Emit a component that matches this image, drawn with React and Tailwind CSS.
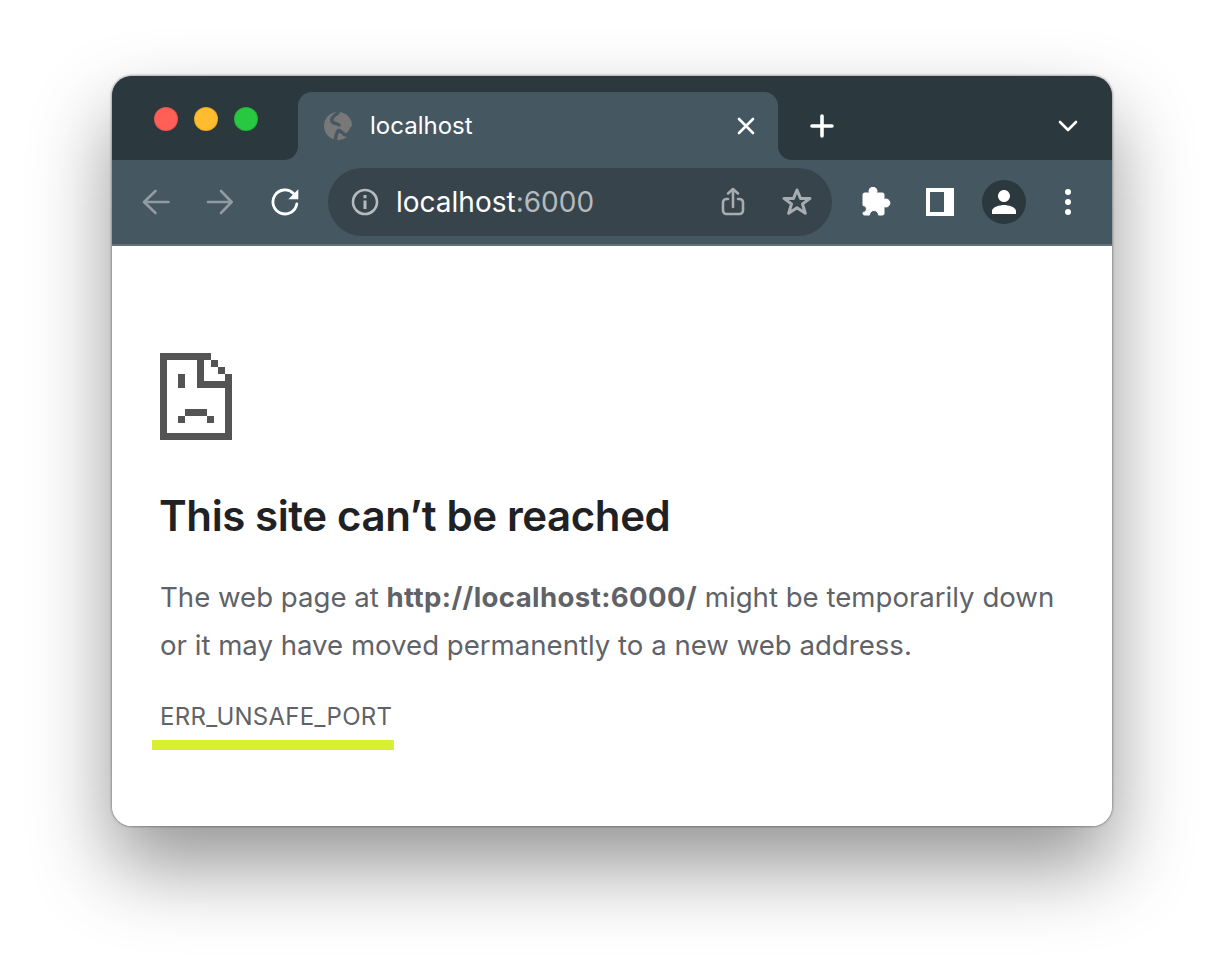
import React from 'react';

const Mat = ({ d, className }) => (
  <svg viewBox="0 0 24 24" fill="currentColor" className={className}>
    <path d={d} />
  </svg>
);

// the sad page icon from the chrome error screen
const SadPage = () => (
  <svg width="72" height="87" viewBox="0 0 72 87" fill="#545454" shapeRendering="crispEdges">
    <rect x="0" y="0" width="7" height="87" />
    <rect x="0" y="0" width="51" height="7" />
    <rect x="0" y="80" width="72" height="7" />
    <rect x="65" y="21" width="7" height="66" />
    <rect x="37" y="0" width="7" height="35" />
    <rect x="37" y="28" width="35" height="7" />
    <rect x="51" y="7" width="7" height="7" />
    <rect x="58" y="14" width="7" height="7" />
    <rect x="18" y="21" width="7" height="14" />
    <rect x="25" y="56" width="22" height="7" />
    <rect x="18" y="63" width="7" height="7" />
    <rect x="47" y="63" width="7" height="7" />
  </svg>
);

const Dot = ({ className }) => <div className={`w-6 h-6 rounded-full border border-black/10 ${className}`} />;

const TabStrip = () => (
  <div className="flex h-[84px] bg-[#455761]">
    <div className="w-[186px] bg-[#2b383e] rounded-br-[14px] flex gap-4 pl-[42px] pt-[31px]">
      <Dot className="bg-[#ff5f57]" />
      <Dot className="bg-[#febc2e]" />
      <Dot className="bg-[#28c840]" />
    </div>
    <div className="w-[480px] bg-[#2b383e] pt-4">
      <div className="h-[68px] bg-[#455761] rounded-t-[14px] flex items-center pl-[26px] pr-[23px]">
        <svg width="28" height="28" viewBox="0 0 28 28" fill="none" className="shrink-0">
          <circle cx="14" cy="14" r="14" fill="#787878" />
          <path d="M14 1C8.5 4 6 8.5 9 10.5c1.8 1.2 4.5.6 6 2.5" stroke="#455761" strokeWidth="3.4" strokeLinecap="round" />
          <path d="M28 16c-2.5 5.5-5 8-7.5 6.5C18 21 15.500 17 14 19c-1.200 1.600-2 4.500-2.500 8" stroke="#455761" strokeWidth="3.4" strokeLinecap="round" />
        </svg>
        <span className="ml-[18px] text-[24px] text-white">localhost</span>
        <svg width="18" height="18" viewBox="0 0 18 18" className="ml-auto text-white" stroke="currentColor" strokeWidth="2.6" strokeLinecap="round">
          <path d="M2 2l14 14M16 2L2 16" />
        </svg>
      </div>
    </div>
    <div className="flex-1 bg-[#2b383e] rounded-bl-[14px] flex items-center pl-[32px] pr-[34px] pt-4 justify-between">
      <svg width="24" height="24" viewBox="0 0 24 24" stroke="white" strokeWidth="3.6" strokeLinecap="round">
        <path d="M12 2v20M2 12h20" />
      </svg>
      <svg width="20" height="12" viewBox="0 0 20 12" fill="none" stroke="white" strokeWidth="2.6" strokeLinecap="round" strokeLinejoin="round">
        <path d="M2 2l8 8 8-8" />
      </svg>
    </div>
  </div>
);

const Toolbar = () => (
  <div className="h-[86px] bg-[#455761] border-b-2 border-[#62727b] flex pt-2 items-start">
    <div className="flex items-center h-[68px] pl-[28px] gap-[30px] w-[216px]">
      <svg width="34" height="28" viewBox="0 0 34 28" fill="none" stroke="#929ba1" strokeWidth="2.6" strokeLinecap="round" strokeLinejoin="round" className="shrink-0">
        <path d="M28.5 14H4.5M15.5 3L4 14l11.5 11" />
      </svg>
      <svg width="34" height="28" viewBox="0 0 34 28" fill="none" stroke="#929ba1" strokeWidth="2.6" strokeLinecap="round" strokeLinejoin="round" className="shrink-0">
        <path d="M4 14h23.7M17 3l10.7 11L17 25" />
      </svg>
      <svg width="28" height="28" viewBox="0 0 28 28" fill="none" className="shrink-0 ml-[3px]">
        <path d="M25.8 16A12 12 0 1 1 22.5 5.5" stroke="white" strokeWidth="2.8" strokeLinecap="round" />
        <path d="M27.3 1.3v10h-10z" fill="white" />
      </svg>
    </div>
    <div className="w-[504px] h-[68px] rounded-full bg-[#37444c] flex items-center pl-[23px] pr-[20px]">
      <svg width="28" height="28" viewBox="0 0 28 28" fill="none" stroke="#b5babe" strokeWidth="2.6" className="shrink-0">
        <circle cx="14" cy="14" r="12" />
        <path d="M14 12.5V21" strokeWidth="3" />
        <path d="M14 7v3.2" strokeWidth="3" />
      </svg>
      <span className="ml-[17px] text-[28px] text-white">
        localhost<span className="text-[#b5babe]">:6000</span>
      </span>
      <svg width="24" height="30" viewBox="0 0 24 30" fill="none" stroke="#a7acb0" strokeWidth="2.6" strokeLinecap="round" strokeLinejoin="round" className="ml-auto">
        <path d="M7 12H5.5A3.5 3.5 0 0 0 2 15.5v8A3.5 3.5 0 0 0 5.5 27h13a3.5 3.5 0 0 0 3.5-3.5v-8a3.5 3.5 0 0 0-3.5-3.5H17" />
        <path d="M12 20V2M7 6.5L12 2l5 4.5" />
      </svg>
      <svg width="30" height="30" viewBox="0 0 30 30" fill="none" stroke="#a7acb0" strokeWidth="3" strokeLinejoin="round" className="ml-[37px]">
        <path d="M15 3l3.5 8.4h9.500l-7.500 5.600 2.800 9.300-8.300-5.500-8.300 5.500 2.800-9.300-7.500-5.600h9.500z" />
      </svg>
    </div>
    <div className="flex-1 h-[68px] flex items-center pl-[30px]">
      <svg width="30" height="30" viewBox="0 0 30 30" fill="white" stroke="white" strokeWidth="1" strokeLinejoin="round">
        <path d="M2.5 6H7.5a4 4 0 1 1 7 0H20.5A1.5 1.5 0 0 1 22 7.5V12.5a4 4 0 1 1 0 7V26.5A1.5 1.5 0 0 1 20.5 28H16.5a4.5 4.5 0 0 0-9 0H2.5A1.5 1.5 0 0 1 1 26.5V25.5a3.5 3.5 0 0 0 0-7V7.5A1.5 1.5 0 0 1 2.5 6z" />
      </svg>
      <div className="ml-[34px] w-7 h-7 bg-white pl-1 pr-[10px] py-1">
        <div className="w-full h-full bg-[#455761]" />
      </div>
      <div className="ml-[28px] w-11 h-11 rounded-full bg-[#2b383e] flex items-center justify-center">
        <Mat
          className="w-9 h-9 text-white"
          d="M12 12c2.21 0 4-1.79 4-4s-1.79-4-4-4-4 1.79-4 4 1.79 4 4 4zm0 2c-2.67 0-8 1.34-8 4v2h16v-2c0-2.66-5.33-4-8-4z"
        />
      </div>
      <div className="ml-[39px] flex flex-col gap-1">
        <div className="w-[6px] h-[6px] rounded-full bg-white" />
        <div className="w-[6px] h-[6px] rounded-full bg-white" />
        <div className="w-[6px] h-[6px] rounded-full bg-white" />
      </div>
    </div>
  </div>
);

const ErrorPage = () => (
  <div className="h-[580px] bg-white pl-12 pt-[107px]">
    <SadPage />
    <h1 className="mt-[46px] -ml-px text-[42px] leading-[60px] font-semibold text-[#202124] tracking-[-0.4px]">
      This site can’t be reached
    </h1>
    <p className="mt-[27px] w-[910px] text-[27.6px] leading-[48px] text-[#5f6368]">
      The web page at <b className="font-bold tracking-[0.38px]">http://localhost:6000/</b> might be temporarily down or it may have moved permanently to a new web address.
    </p>
    <div className="mt-[33px] text-[24px] leading-[30px] tracking-[0.27px] text-[#5f6368]">ERR_UNSAFE_PORT</div>
    <div className="mt-2 -ml-2 w-[242px] h-[10px] bg-[#d9ef33]" />
  </div>
);

export default function App() {
  return (
    <div className="min-h-[974px] bg-white pt-[76px] pl-[112px] font-['Inter',sans-serif]">
      <div className="w-[1000px] h-[750px] rounded-[20px] overflow-hidden shadow-[0_40px_80px_rgba(0,0,0,0.42),0_0_3px_rgba(0,0,0,0.6)]">
        <TabStrip />
        <Toolbar />
        <ErrorPage />
      </div>
    </div>
  );
}
